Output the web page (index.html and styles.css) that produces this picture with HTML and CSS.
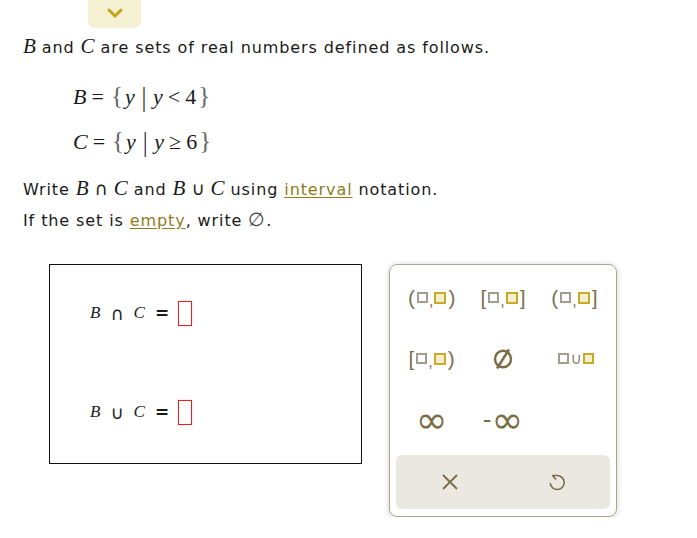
FILE: index.html
```html
<!DOCTYPE html>
<html>
<head>
<meta charset="utf-8">
<link rel="stylesheet" href="styles.css">
</head>
<body>
<div class="page">
  <div class="tab">
    <svg width="18" height="12" viewBox="0 0 18 12"><polyline points="3,3 9,9 15,3" fill="none" stroke="#c2a514" stroke-width="3" stroke-linecap="round" stroke-linejoin="round"/></svg>
  </div>
  <p class="intro"><i class="m">B</i> and <i class="m">C</i> are sets of real numbers defined as follows.</p>
  <div class="eqs">
    <div class="eq"><i>B</i><span class="op">=</span><span class="br">{</span><i>y</i><span class="bar">|</span><i>y</i><span class="op">&lt;</span>4<span class="br">}</span></div>
    <div class="eq"><i>C</i><span class="op">=</span><span class="br">{</span><i>y</i><span class="bar">|</span><i>y</i><span class="op">≥</span>6<span class="br">}</span></div>
  </div>
  <p class="instr">Write <i class="m">B</i> <span class="so">∩</span> <i class="m">C</i> and <i class="m">B</i> <span class="so">∪</span> <i class="m">C</i> using <a class="lnk">interval</a> notation.</p>
  <p class="instr">If the set is <a class="lnk">empty</a>, write <span class="empty">∅</span>.</p>
  <div class="work">
    <div class="answers">
      <div class="arow"><i class="v">B</i><span class="set">∩</span><i class="v">C</i><span class="eqs-sign">=</span><span class="slot"></span></div>
      <div class="arow"><i class="v">B</i><span class="set">∪</span><i class="v">C</i><span class="eqs-sign">=</span><span class="slot"></span></div>
    </div>
    <div class="palette">
      <div class="keys">
        <div class="key"><span class="iv"><span class="p">(</span><span class="sq g"></span><span class="cm">,</span><span class="sq y"></span><span class="p">)</span></span></div>
        <div class="key"><span class="iv"><span class="p">[</span><span class="sq g"></span><span class="cm">,</span><span class="sq y"></span><span class="p">]</span></span></div>
        <div class="key"><span class="iv"><span class="p">(</span><span class="sq g"></span><span class="cm">,</span><span class="sq y"></span><span class="p">]</span></span></div>
        <div class="key"><span class="iv"><span class="p">[</span><span class="sq g"></span><span class="cm">,</span><span class="sq y"></span><span class="p">)</span></span></div>
        <div class="key">
          <svg width="26" height="22" viewBox="0 0 26 22"><ellipse cx="13" cy="11" rx="8" ry="8.3" fill="none" stroke="#7a6c44" stroke-width="2.4"/><line x1="19" y1="1.5" x2="7" y2="20.5" stroke="#7a6c44" stroke-width="2.4"/></svg>
        </div>
        <div class="key"><span class="un"><span class="sq g s"></span><span class="cup">∪</span><span class="sq y s"></span></span></div>
        <div class="key"><span class="inf">∞</span></div>
        <div class="key"><span class="inf"><span class="neg">-</span>∞</span></div>
        <div class="key"></div>
      </div>
      <div class="actions">
        <div class="act">
          <svg width="18" height="18" viewBox="0 0 18 18"><path d="M2 2 L16 16 M16 2 L2 16" stroke="#7a6c44" stroke-width="1.8" fill="none"/></svg>
        </div>
        <div class="act">
          <svg width="20" height="22" viewBox="0 0 20 22"><path d="M10 4.5 A7 7 0 1 1 3.2 12" fill="none" stroke="#7a6c44" stroke-width="1.6"/><path d="M10 4.5 L5.5 4.5 L9 8.5" fill="none" stroke="#7a6c44" stroke-width="1.6" stroke-linejoin="round"/></svg>
        </div>
      </div>
    </div>
  </div>
</div>
</body>
</html>
```

FILE: styles.css
```css
html, body {
  margin: 0;
  padding: 0;
  background: #ffffff;
}

.page {
  font-family: "DejaVu Sans", Verdana, sans-serif;
  font-size: 16px;
  letter-spacing: 0.9px;
  color: #1a1a1a;
}

.tab {
  margin-left: 88px;
  width: 53px;
  height: 28px;
  background: #f4f0d2;
  border-radius: 0 0 7px 7px;
  display: flex;
  justify-content: center;
  align-items: center;
  padding-bottom: 2px;
  box-sizing: border-box;
}

.tab svg {
  display: block;
}

.m {
  font-family: "Liberation Serif", "Times New Roman", serif;
  font-style: italic;
  font-size: 21px;
  letter-spacing: 0;
}

.so {
  font-size: 18px;
  letter-spacing: 0;
}

.intro {
  margin: 8px 0 0 23px;
  line-height: 20px;
}

.eqs {
  margin: 15px 0 0 73px;
}

.eq {
  font-family: "Liberation Serif", "Times New Roman", serif;
  font-size: 22px;
  line-height: 45px;
  height: 45px;
  white-space: nowrap;
  letter-spacing: 0;
}

.eq .op {
  margin: 0 5px;
}

.eq .br {
  font-size: 25px;
  color: #666;
  margin: 0 2px;
}

.eq .bar {
  display: inline-block;
  margin: 0 7px;
  transform: scaleY(1.25);
}

.instr {
  margin: 0 0 0 23px;
  line-height: 31px;
  height: 31px;
}

.eqs + .instr {
  margin-top: 10px;
}

.lnk {
  color: #8e7d1c;
  text-decoration: underline;
  text-underline-offset: 2px;
}

.empty {
  font-family: "DejaVu Serif", serif;
  font-size: 19px;
  color: #444;
}

.work {
  margin: 29px 0 0 49px;
  display: flex;
  align-items: flex-start;
  gap: 27px;
  letter-spacing: 0;
}

.answers {
  width: 313px;
  height: 200px;
  box-sizing: border-box;
  border: 1px solid #111;
  padding: 35px 0 0 40px;
  display: flex;
  flex-direction: column;
  gap: 73px;
}

.arow {
  display: flex;
  align-items: center;
  height: 26px;
}

.v {
  font-family: "Liberation Serif", "Times New Roman", serif;
  font-style: italic;
  font-size: 17px;
  color: #222;
}

.set {
  font-size: 18px;
  margin: 0 10px 0 10px;
  color: #222;
}

.eqs-sign {
  font-size: 17px;
  font-weight: bold;
  margin: 0 9px 0 10px;
}

.slot {
  width: 14px;
  height: 25px;
  box-sizing: border-box;
  border: 1.5px solid #d9262b;
  box-shadow: 0 0 2px rgba(217, 38, 43, 0.25);
}

.palette {
  width: 228px;
  height: 253px;
  box-sizing: border-box;
  border: 1px solid #aaa58b;
  border-radius: 8px;
  box-shadow: 0 1px 6px rgba(0, 0, 0, 0.18);
  padding: 2px 6px 7px;
  display: flex;
  flex-direction: column;
}

.keys {
  display: grid;
  grid-template-columns: repeat(3, 1fr);
  grid-auto-rows: 61px;
}

.key {
  display: flex;
  align-items: center;
  justify-content: center;
  color: #7a6c44;
}

.iv {
  display: flex;
  align-items: center;
  font-family: "Liberation Sans", Arial, sans-serif;
  font-size: 21px;
  color: #7d7150;
}

.p {
  line-height: 1;
  margin: 0 2px;
  font-weight: 300;
}

.cm {
  margin: 0 1px;
  line-height: 1;
  position: relative;
  top: 3px;
  font-size: 16px;
}

.sq {
  display: inline-block;
  width: 11px;
  height: 11px;
  box-sizing: border-box;
}

.sq.g {
  border: 2px solid #a29d8c;
  background: #fff;
}

.sq.y {
  width: 12px;
  height: 12px;
  border: 2px solid #c6aa28;
  background: #f4eecc;
}

.sq.s {
  width: 11px;
  height: 11px;
}

.un {
  display: flex;
  align-items: center;
  margin-left: 4px;
}

.cup {
  font-family: "DejaVu Sans", sans-serif;
  font-size: 16px;
  color: #8a8068;
  margin: 0 1px;
  line-height: 1;
}

.inf {
  font-family: "DejaVu Sans", sans-serif;
  font-size: 38px;
  line-height: 1;
  color: #7a6c44;
  display: flex;
  align-items: center;
}

.neg {
  font-size: 24px;
  margin-right: 0;
  position: relative;
  top: 0;
}

.actions {
  margin-top: 5px;
  height: 54px;
  background: #ebe8e1;
  border-radius: 6px;
  display: grid;
  grid-template-columns: 1fr 1fr;
}

.act {
  display: flex;
  align-items: center;
  justify-content: center;
}

.act svg {
  display: block;
}
```
